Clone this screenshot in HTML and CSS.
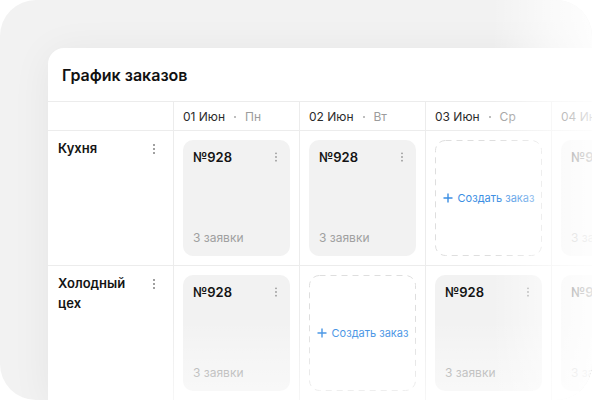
FILE: index.html
```html
<!DOCTYPE html>
<html>
  <head>
    <meta charset="UTF-8" />
    <title>График заказов</title>
    <link rel="stylesheet" href="styles.css">
  </head>
  <body>
    <div class="frame">
      <div class="board">
        <h1 class="board-title">График заказов</h1>
        <div class="grid">
          <!-- header row -->
          <div class="cell head"></div>
          <div class="cell head"><span>01 Июн</span><i class="sep"></i><span class="dow">Пн</span></div>
          <div class="cell head"><span>02 Июн</span><i class="sep"></i><span class="dow">Вт</span></div>
          <div class="cell head"><span>03 Июн</span><i class="sep"></i><span class="dow">Ср</span></div>
          <div class="cell head"><span>04 Июн</span><i class="sep"></i><span class="dow">Чт</span></div>

          <!-- Кухня -->
          <div class="cell label">
            <span>Кухня</span>
            <svg class="kebab" width="20" height="20" viewBox="0 0 20 20"><circle cx="10" cy="6" r="1.1"/><circle cx="10" cy="10" r="1.1"/><circle cx="10" cy="14" r="1.1"/></svg>
          </div>
          <div class="cell slot">
            <div class="order">
              <div class="order-top"><span class="order-num">№928</span><svg class="kebab-sm" width="8" height="16" viewBox="0 0 8 16"><circle cx="4" cy="4.3" r="0.9"/><circle cx="4" cy="8" r="0.9"/><circle cx="4" cy="11.7" r="0.9"/></svg></div>
              <span class="order-count">3 заявки</span>
            </div>
          </div>
          <div class="cell slot">
            <div class="order">
              <div class="order-top"><span class="order-num">№928</span><svg class="kebab-sm" width="8" height="16" viewBox="0 0 8 16"><circle cx="4" cy="4.3" r="0.9"/><circle cx="4" cy="8" r="0.9"/><circle cx="4" cy="11.7" r="0.9"/></svg></div>
              <span class="order-count">3 заявки</span>
            </div>
          </div>
          <div class="cell slot">
            <div class="create">
              <svg class="dash" width="107" height="116" viewBox="0 0 107 116"><rect x="0.5" y="0.5" width="106" height="115" rx="10"/></svg>
              <div class="create-text"><svg width="10" height="10" viewBox="0 0 10 10"><path d="M5 0.5v9M0.5 5h9"/></svg>Создать заказ</div>
            </div>
          </div>
          <div class="cell slot">
            <div class="order">
              <div class="order-top"><span class="order-num">№928</span><svg class="kebab-sm" width="8" height="16" viewBox="0 0 8 16"><circle cx="4" cy="4.3" r="0.9"/><circle cx="4" cy="8" r="0.9"/><circle cx="4" cy="11.7" r="0.9"/></svg></div>
              <span class="order-count">3 заявки</span>
            </div>
          </div>

          <!-- Холодный цех -->
          <div class="cell label">
            <span>Холодный цех</span>
            <svg class="kebab" width="20" height="20" viewBox="0 0 20 20"><circle cx="10" cy="6" r="1.1"/><circle cx="10" cy="10" r="1.1"/><circle cx="10" cy="14" r="1.1"/></svg>
          </div>
          <div class="cell slot">
            <div class="order">
              <div class="order-top"><span class="order-num">№928</span><svg class="kebab-sm" width="8" height="16" viewBox="0 0 8 16"><circle cx="4" cy="4.3" r="0.9"/><circle cx="4" cy="8" r="0.9"/><circle cx="4" cy="11.7" r="0.9"/></svg></div>
              <span class="order-count">3 заявки</span>
            </div>
          </div>
          <div class="cell slot">
            <div class="create">
              <svg class="dash" width="107" height="116" viewBox="0 0 107 116"><rect x="0.5" y="0.5" width="106" height="115" rx="10"/></svg>
              <div class="create-text"><svg width="10" height="10" viewBox="0 0 10 10"><path d="M5 0.5v9M0.5 5h9"/></svg>Создать заказ</div>
            </div>
          </div>
          <div class="cell slot">
            <div class="order">
              <div class="order-top"><span class="order-num">№928</span><svg class="kebab-sm" width="8" height="16" viewBox="0 0 8 16"><circle cx="4" cy="4.3" r="0.9"/><circle cx="4" cy="8" r="0.9"/><circle cx="4" cy="11.7" r="0.9"/></svg></div>
              <span class="order-count">3 заявки</span>
            </div>
          </div>
          <div class="cell slot">
            <div class="order">
              <div class="order-top"><span class="order-num">№928</span><svg class="kebab-sm" width="8" height="16" viewBox="0 0 8 16"><circle cx="4" cy="4.3" r="0.9"/><circle cx="4" cy="8" r="0.9"/><circle cx="4" cy="11.7" r="0.9"/></svg></div>
              <span class="order-count">3 заявки</span>
            </div>
          </div>
        </div>
      </div>
    </div>
  </body>
</html>
```

FILE: styles.css
```css
* {
  box-sizing: border-box;
}
body {
  margin: 0;
  background: #fff;
  font-family: Inter, "Noto Sans", sans-serif;
  color: #141414;
}
.frame {
  position: relative;
  width: 592px;
  height: 400px;
  padding: 48px 0 0 48px;
  background: #f2f2f2;
  border-radius: 36px;
  overflow: hidden;
}
/* soft fade to the right and bottom edges */
.frame::after {
  content: "";
  position: absolute;
  inset: 0;
  background:
    linear-gradient(to right, rgba(255, 255, 255, 0) 492px, rgba(255, 255, 255, 0.6) 552px, rgba(255, 255, 255, 0.88) 592px),
    linear-gradient(to bottom, rgba(255, 255, 255, 0) 320px, rgba(255, 255, 255, 0.55) 400px) 48px 0 / 100% 100% no-repeat;
  pointer-events: none;
}
.board {
  width: 630px;
  background: #fff;
  border-radius: 16px 0 0 0;
  box-shadow: 0 4px 40px rgba(0, 0, 0, 0.06);
}
.board-title {
  margin: 0;
  height: 54px;
  display: flex;
  align-items: center;
  padding-left: 14px;
  font-size: 16px;
  font-weight: 600;
  color: #111;
  border-bottom: 1px solid #ececec;
}
.grid {
  display: grid;
  grid-template-columns: repeat(5, 126px);
  grid-template-rows: 29px 135px 135px;
}
.cell {
  border-right: 1px solid #ececec;
  border-bottom: 1px solid #ececec;
}
.head {
  display: flex;
  align-items: center;
  padding-left: 9px;
  font-size: 12px;
  color: #2b2b2b;
  white-space: nowrap;
}
.sep {
  width: 2px;
  height: 2px;
  border-radius: 50%;
  background: #a8a8a8;
  margin: 1px 9px 0;
}
.dow {
  color: #9c9c9c;
}
.label {
  display: flex;
  justify-content: space-between;
  align-items: flex-start;
  padding: 8px 9px 0 10px;
  font-size: 13px;
  font-weight: 600;
  line-height: 19.5px;
}
.kebab {
  flex: none;
  fill: #8a8a8a;
}
.slot {
  padding: 9px;
}
.order {
  height: 116px;
  display: flex;
  flex-direction: column;
  justify-content: space-between;
  padding: 9px 10px 10px;
  background: #f2f2f2;
  border-radius: 10px;
}
.order-top {
  display: flex;
  justify-content: space-between;
  align-items: center;
}
.order-num {
  font-size: 13px;
  font-weight: 600;
  line-height: 16px;
}
.kebab-sm {
  fill: #9a9a9a;
}
.order-count {
  font-size: 12px;
  line-height: 16px;
  color: #a0a0a0;
}
.create {
  display: grid;
  height: 116px;
}
.create > * {
  grid-area: 1 / 1;
}
.dash rect {
  fill: none;
  stroke: #dedede;
  stroke-dasharray: 6 5;
}
.create-text {
  display: flex;
  align-items: center;
  justify-content: center;
  gap: 5px;
  font-size: 11px;
  color: #3b8ee3;
}
.create-text svg {
  stroke: #3b8ee3;
  stroke-width: 1.4;
}
```
